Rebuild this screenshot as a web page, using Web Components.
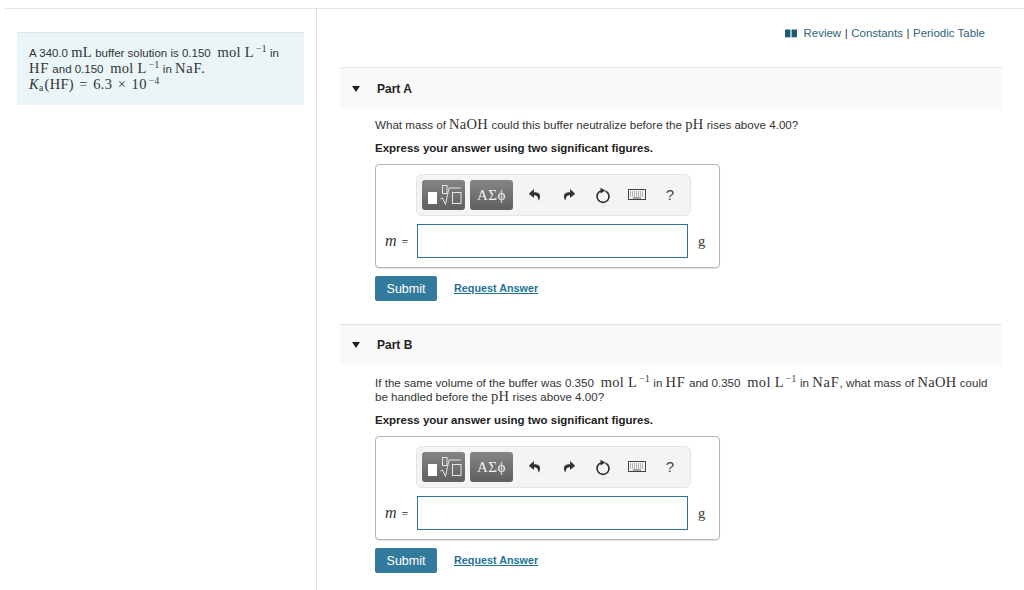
<!DOCTYPE html>
<html lang="en">
<head>
<meta charset="utf-8">
<title>Buffer problem</title>
<style>
  html, body { margin: 0; padding: 0; background: #fff; }
  body { width: 1024px; height: 590px; overflow: hidden; font-family: "Liberation Sans", Arial, sans-serif; color: #222; }
</style>
</head>
<body>
<item-page>
  <intro-panel slot="intro">
    A 340.0 <math-run>mL</math-run> buffer solution is 0.150 <math-run gap sup="−1">mol L</math-run> in
    <math-run wide>HF</math-run> and 0.150 <math-run gap sup="−1">mol L</math-run> in <math-run wide>NaF.</math-run><br>
    <math-run italic sub="a">K</math-run><math-run sup="−4" style="word-spacing: 1.5px">(HF) = 6.3 × 10</math-run>
  </intro-panel>
  <top-links slot="links"></top-links>
  <part-section title="Part A">
    <span slot="question">What mass of <math-run>NaOH</math-run> could this buffer neutralize before the <math-run>pH</math-run> rises above 4.00?</span>
  </part-section>
  <part-section title="Part B" style="--head-height: 41px; --body-top: 11px">
    <span slot="question">If the same volume of the buffer was 0.350 <math-run gap sup="−1">mol L</math-run> in <math-run wide>HF</math-run> and 0.350 <math-run gap sup="−1">mol L</math-run> in <math-run wide>NaF</math-run>, what mass of <math-run>NaOH</math-run> could be handled before the <math-run>pH</math-run> rises above 4.00?</span>
  </part-section>
</item-page>

<script>
// inline maths, serif with optional super/subscript
class MathRun extends HTMLElement {
  constructor() {
    super();
    const root = this.attachShadow({ mode: "open" });
    const sup = this.getAttribute("sup");
    const sub = this.getAttribute("sub");
    // no whitespace around the slot, it would show up as a space
    root.innerHTML = `<style>
      :host { display: inline; font-family: "Liberation Serif", "Times New Roman", serif; font-size: 14.5px; line-height: 0; letter-spacing: .3px; color: #333; }
      :host([italic]) { font-style: italic; }
      :host([gap]) { margin-left: 3.5px; }
      :host([wide]) { letter-spacing: .8px; }
      .sup, .sub { font-size: 9.5px; line-height: 0; position: relative; font-style: normal; }
      .sup { top: -5px; margin-left: 2px; letter-spacing: .4px; }
      .sub { top: 2px; margin-right: 1px; }
    </style><slot></slot>${sub ? `<span class="sub">${sub}</span>` : ""}${sup ? `<span class="sup">${sup}</span>` : ""}`;
  }
}

class IntroPanel extends HTMLElement {
  constructor() {
    super();
    this.attachShadow({ mode: "open" }).innerHTML = `
    <style>
      :host {
        display: block;
        box-sizing: border-box;
        margin: 23px 12px 0 17px;
        height: 73px;
        padding: 12px 11px 0 12px;
        background: #e9f5f7;
        border-top: 1px solid #e2e2e2;
        font-size: 11.5px;
        line-height: 16px;
        color: #333;
      }
    </style>
    <slot></slot>`;
  }
}

class TopLinks extends HTMLElement {
  constructor() {
    super();
    this.attachShadow({ mode: "open" }).innerHTML = `
    <style>
      :host {
        display: flex;
        justify-content: flex-end;
        align-items: center;
        height: 16px;
        margin: 16px 17px 0 0;
        font-size: 11.5px;
        color: #444;
      }
      svg { margin-right: 6px; }
      a { color: #2f6479; text-decoration: none; }
      .sep { margin: 0 3.5px; color: #333; }
    </style>
    <svg width="12" height="9" viewBox="0 0 12 9">
      <path fill="#1f5a72" d="M0 .5h5.4v7.8H0zM6.6 .5H12v7.8H6.6z"/>
      <path fill="#b9ccd4" d="M0 8.300h5.600v.7H0zM6.400 8.300H12v.7H6.400z"/>
    </svg>
    <a>Review</a><span class="sep">|</span><a>Constants</a><span class="sep">|</span><a>Periodic Table</a>`;
  }
}

class MathToolbar extends HTMLElement {
  constructor() {
    super();
    this.attachShadow({ mode: "open" }).innerHTML = `
    <style>
      :host {
        display: flex;
        align-items: center;
        box-sizing: border-box;
        width: 275px;
        height: 42px;
        margin-left: 40px;
        padding-left: 5px;
        background: #f4f4f4;
        border: 1px solid #e4e4e4;
        border-radius: 6px;
      }
      .btn {
        display: flex;
        align-items: center;
        justify-content: center;
        flex: none;
        box-sizing: border-box;
        width: 43px;
        height: 30px;
        border-radius: 3px;
        background: linear-gradient(#858585, #5f5f5f);
        color: #f2f2f2;
      }
      .symbols {
        margin-left: 5px;
        font: 15px "Liberation Serif", "Times New Roman", serif;
        letter-spacing: .5px;
      }
      .tools { display: flex; align-items: center; margin-left: 5px; }
      .tool { display: flex; justify-content: center; flex: none; width: 34px; }
      .help { font-size: 15px; margin: -2px 0 0 -1px; color: #444; }
    </style>
    <div class="btn templates">
      <svg width="43" height="30" viewBox="0 0 43 30" fill="none" stroke="#e6e6e6" stroke-width="1">
        <rect x="6" y="12" width="9" height="12" fill="#fff" stroke="none"/>
        <rect x="20.500" y="5.500" width="4.500" height="8"/>
        <path d="M18.500 19l2-1 3 6.500 3.500-16.500h12"/>
        <rect x="30.500" y="12.500" width="8.500" height="11"/>
      </svg>
    </div>
    <div class="btn symbols">ΑΣϕ</div>
    <div class="tools">
      <div class="tool">
        <svg width="14" height="14" viewBox="0 0 14 14"><path fill="#333" d="M6 1L.8 5.700 6 10V7.200c2.600 0 4 .8 4.600 5.600 1.700-2.400 1.800-5 .9-6.600C10.700 4.700 8.700 4.200 6 4.200z"/></svg>
      </div>
      <div class="tool">
        <svg width="14" height="14" viewBox="0 0 14 14"><path fill="#333" d="M8 1l5.200 4.700L8 10V7.200c-2.600 0-4 .8-4.600 5.600-1.700-2.400-1.800-5-.9-6.600C3.300 4.700 5.300 4.200 8 4.200z"/></svg>
      </div>
      <div class="tool">
        <svg width="16" height="17" viewBox="0 0 16 17"><path fill="none" stroke="#333" stroke-width="1.700" d="M10.500 4a6 6 0 1 1-4.500-.2"/><path fill="#333" d="M5.500 .8l5 2.800-5 2.800z"/></svg>
      </div>
      <div class="tool">
        <svg width="18" height="12" viewBox="0 0 18 12"><rect x=".5" y=".5" width="17" height="10" fill="#f4f4f4" stroke="#444"/><path stroke="#777" stroke-width="1" stroke-dasharray="1 1" d="M2 3h14M2 5h14M2 7h14"/><path stroke="#555" d="M5 9h8"/></svg>
      </div>
      <div class="tool help">?</div>
    </div>`;
  }
}

class AnswerBox extends HTMLElement {
  constructor() {
    super();
    this.attachShadow({ mode: "open" }).innerHTML = `
    <style>
      :host {
        display: block;
        box-sizing: border-box;
        width: 345px;
        height: 104px;
        padding-top: 9px;
        border: 1px solid #b5b5b5;
        border-radius: 4px;
        box-shadow: 0 1px 1px #e4e4e4;
      }
      .row { display: flex; align-items: center; margin-top: 8px; }
      .label { width: 41px; padding-left: 9px; box-sizing: border-box; font: 12px "Liberation Serif", "Times New Roman", serif; word-spacing: 2px; color: #333; }
      .label i { font-size: 16px; }
      .input { box-sizing: border-box; width: 271px; height: 34px; border: 1px solid #2f7497; background: #fff; }
      .unit { margin-left: 10px; font: 14.5px "Liberation Serif", "Times New Roman", serif; color: #333; }
    </style>
    <math-toolbar></math-toolbar>
    <div class="row">
      <div class="label"><i>m</i> =</div>
      <div class="input"></div>
      <div class="unit">g</div>
    </div>`;
  }
}

class PartSection extends HTMLElement {
  constructor() {
    super();
    const title = this.getAttribute("title");
    this.attachShadow({ mode: "open" }).innerHTML = `
    <style>
      :host { display: block; margin-bottom: 23px; font-size: 11.5px; color: #333; }
      header {
        display: flex;
        align-items: center;
        box-sizing: border-box;
        height: var(--head-height, 42px);
        padding-left: 12px;
        background: #f9f9f9;
        border-top: 1px solid #e4e4e4;
        font-size: 12px;
        font-weight: bold;
        color: #222;
      }
      .arrow { width: 0; height: 0; margin-right: 17px; border: 4.500px solid transparent; border-top: 6px solid #222; border-bottom: 0; }
      .body { padding: var(--body-top, 9px) 10px 0 35px; }
      .question { font-size: 11.6px; line-height: 14px; margin-bottom: 9px; }
      .hint { font-weight: bold; line-height: 14px; margin-bottom: 9px; color: #222; }
      .actions { display: flex; align-items: center; margin-top: 8px; }
      .submit { box-sizing: border-box; width: 62px; height: 25px; line-height: 26px; text-align: center; background: #347a9c; color: #fff; border-radius: 2px; font-size: 12.500px; }
      .request { margin-left: 17px; margin-top: -2px; color: #1f7396; font-size: 10.800px; font-weight: bold; text-decoration: underline; }
    </style>
    <header><span class="arrow"></span>${title}</header>
    <div class="body">
      <div class="question"><slot name="question"></slot></div>
      <div class="hint">Express your answer using two significant figures.</div>
      <answer-box></answer-box>
      <div class="actions"><span class="submit">Submit</span><a class="request">Request Answer</a></div>
    </div>`;
  }
}

class ItemPage extends HTMLElement {
  constructor() {
    super();
    this.attachShadow({ mode: "open" }).innerHTML = `
    <style>
      :host {
        display: grid;
        grid-template-columns: 312px 1fr;
        box-sizing: border-box;
        height: 582px;
        margin: 8px 0 0 5px;
        width: 1019px;
        border-top: 1px solid #e4e4e4;
      }
      .left { margin-left: -5px; border-right: 1px solid #d8e2e8; }
      .right { padding: 0 22px 0 23px; }
      .parts { margin-top: 26px; }
    </style>
    <div class="left"><slot name="intro"></slot></div>
    <div class="right">
      <slot name="links"></slot>
      <div class="parts"><slot></slot></div>
    </div>`;
  }
}

customElements.define("math-run", MathRun);
customElements.define("intro-panel", IntroPanel);
customElements.define("top-links", TopLinks);
customElements.define("math-toolbar", MathToolbar);
customElements.define("answer-box", AnswerBox);
customElements.define("part-section", PartSection);
customElements.define("item-page", ItemPage);
</script>
</body>
</html>
